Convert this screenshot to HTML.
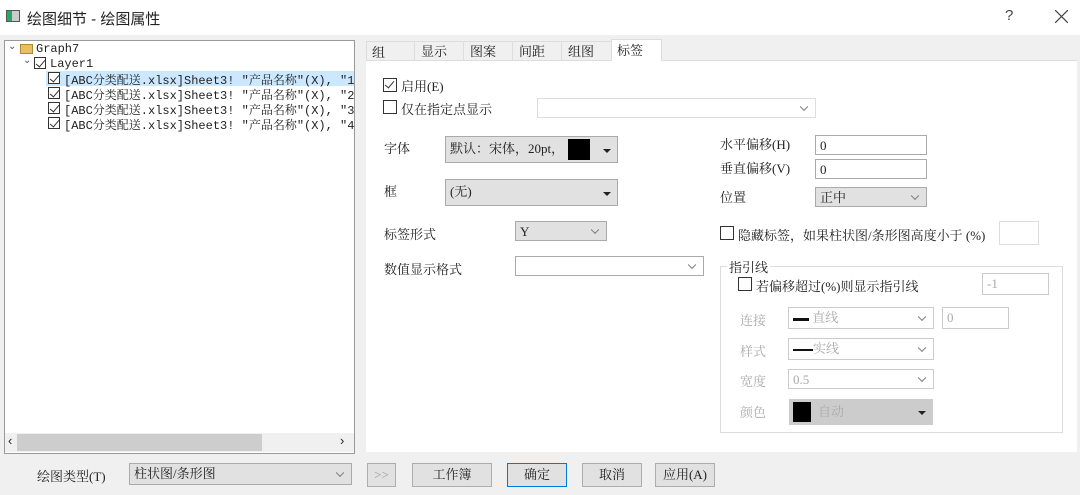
<!DOCTYPE html><html><head><meta charset="utf-8"><style>
*{margin:0;padding:0;box-sizing:border-box}
body{width:1080px;height:495px;background:#f0f0f0;position:relative;overflow:hidden;font-family:"Liberation Serif","Noto Serif CJK SC",serif;font-size:13px;color:#222}
.a{position:absolute;white-space:nowrap}
.t{font-family:"Liberation Mono","Noto Serif CJK SC",monospace;font-size:12px}
.cb{position:absolute;width:14px;height:14px;border:1px solid #333;background:#fff}
.cb.k::after{content:"";position:absolute;left:3px;top:0px;width:4px;height:8px;border:solid #333;border-width:0 1.5px 1.5px 0;transform:rotate(40deg)}
.box{position:absolute;border:1px solid #aaa;background:#fff;padding:2px 4px;line-height:16px}
.g{background:#e1e1e1}
.dd::after{content:"";position:absolute;right:8px;top:50%;width:5px;height:5px;border:solid #777;border-width:0 1px 1px 0;transform:translateY(-70%) rotate(45deg)}
.tri::after{content:"";position:absolute;right:6px;top:50%;border:4px solid transparent;border-top:4px solid #222;border-bottom:0;margin-top:-1px}
.btn{position:absolute;border:1px solid #adadad;background:#e1e1e1;text-align:center;line-height:22px;height:24px}
.dim{color:#aaa}
</style></head><body>
<div class="a" style="left:0;top:0;width:1080px;height:35px;background:#fff"></div>
<div class="a" style="left:6px;top:10px;width:14px;height:12px;border:1px solid #555;background:linear-gradient(90deg,#2a6 0 40%,#ccc 40%)"></div>
<div class="a" style="left:27px;top:8px;font-family:'Liberation Sans','Noto Sans CJK SC',sans-serif;font-size:15px">绘图细节 - 绘图属性</div>
<div class="a" style="left:1005px;top:7px;font-family:'Liberation Sans',sans-serif;font-size:15px;color:#444">?</div>
<svg class="a" style="left:1055px;top:10px" width="13" height="13"><path d="M0 0L13 13M13 0L0 13" stroke="#444" stroke-width="1.2"/></svg>

<div class="a" style="left:4px;top:40px;width:351px;height:414px;background:#fff;border:1px solid #999"></div>
<div class="a" style="left:8px;top:41px;font-size:10px;color:#555">⌄</div>
<div class="a" style="left:20px;top:44px;width:13px;height:10px;background:#e8c060;border:1px solid #b08a30"></div>
<div class="a t" style="left:36px;top:42px">Graph7</div>
<div class="a" style="left:23px;top:55px;font-size:10px;color:#555">⌄</div>
<div class="cb k" style="left:34px;top:57px;width:12px;height:12px"></div>
<div class="a t" style="left:50px;top:57px">Layer1</div>
<div class="a" style="left:46px;top:71px;width:308px;height:15px;background:#cce8ff"></div>
<div class="cb k" style="left:48px;top:72px;width:12px;height:12px"></div>
<div class="a t" style="left:64px;top:71px;width:290px;overflow:hidden">[ABC分类配送.xlsx]Sheet3! "产品名称"(X), "1</div>
<div class="cb k" style="left:48px;top:87px;width:12px;height:12px"></div>
<div class="a t" style="left:64px;top:86px;width:290px;overflow:hidden">[ABC分类配送.xlsx]Sheet3! "产品名称"(X), "2</div>
<div class="cb k" style="left:48px;top:102px;width:12px;height:12px"></div>
<div class="a t" style="left:64px;top:101px;width:290px;overflow:hidden">[ABC分类配送.xlsx]Sheet3! "产品名称"(X), "3</div>
<div class="cb k" style="left:48px;top:117px;width:12px;height:12px"></div>
<div class="a t" style="left:64px;top:116px;width:290px;overflow:hidden">[ABC分类配送.xlsx]Sheet3! "产品名称"(X), "4</div>
<div class="a" style="left:5px;top:433px;width:349px;height:19px;background:#f0f0f0"></div>
<div class="a" style="left:17px;top:434px;width:245px;height:17px;background:#cdcdcd"></div>
<div class="a" style="left:8px;top:433px;font-size:13px;font-family:'Liberation Sans',sans-serif">‹</div>
<div class="a" style="left:340px;top:433px;font-size:13px;font-family:'Liberation Sans',sans-serif">›</div>

<div class="a" style="left:366px;top:60px;width:711px;height:392px;background:#fff;border-top:1px solid #ddd"></div>
<div class="a" style="left:366px;top:41px;width:247px;height:19px;border:1px solid #ddd;border-bottom:0"></div>
<div class="a" style="left:372px;top:42px">组</div>
<div class="a" style="left:414px;top:41px;height:19px;border-left:1px solid #ddd;padding-left:6px">显示</div>
<div class="a" style="left:463px;top:41px;height:19px;border-left:1px solid #ddd;padding-left:6px">图案</div>
<div class="a" style="left:512px;top:41px;height:19px;border-left:1px solid #ddd;padding-left:6px">间距</div>
<div class="a" style="left:561px;top:41px;height:19px;border-left:1px solid #ddd;padding-left:6px">组图</div>
<div class="a" style="left:611px;top:39px;width:51px;height:22px;background:#fff;border:1px solid #ddd;border-bottom:0;padding-left:5px">标签</div>

<div class="cb k" style="left:383px;top:78px"></div><div class="a" style="left:401px;top:76px">启用(E)</div>
<div class="cb" style="left:383px;top:100px"></div><div class="a" style="left:401px;top:99px">仅在指定点显示</div>
<div class="box dd" style="left:537px;top:98px;width:279px;height:20px;border-color:#ddd"></div>
<div class="a" style="left:384px;top:138px">字体</div>
<div class="box g tri" style="left:445px;top:136px;width:173px;height:27px;padding-top:4px">默认：宋体，20pt，</div>
<div class="a" style="left:568px;top:139px;width:22px;height:21px;background:#000"></div>
<div class="a" style="left:384px;top:181px">框</div>
<div class="box g tri" style="left:445px;top:179px;width:173px;height:27px;padding-top:4px">(无)</div>
<div class="a" style="left:384px;top:224px">标签形式</div>
<div class="box g dd" style="left:515px;top:221px;width:92px;height:20px">Y</div>
<div class="a" style="left:384px;top:259px">数值显示格式</div>
<div class="box dd" style="left:515px;top:256px;width:189px;height:20px"></div>

<div class="a" style="left:720px;top:134px">水平偏移(H)</div>
<div class="box" style="left:815px;top:135px;width:112px;height:20px">0</div>
<div class="a" style="left:720px;top:158px">垂直偏移(V)</div>
<div class="box" style="left:815px;top:159px;width:112px;height:20px">0</div>
<div class="a" style="left:720px;top:187px">位置</div>
<div class="box g dd" style="left:815px;top:187px;width:112px;height:20px">正中</div>
<div class="cb" style="left:720px;top:226px"></div>
<div class="a" style="left:738px;top:225px">隐藏标签，如果柱状图/条形图高度小于 (%)</div>
<div class="box" style="left:999px;top:221px;width:40px;height:24px;border-color:#ddd"></div>

<div class="a" style="left:720px;top:266px;width:343px;height:167px;border:1px solid #ddd"></div>
<div class="a" style="left:727px;top:257px;background:#fff;padding:0 2px">指引线</div>
<div class="cb" style="left:738px;top:277px"></div>
<div class="a" style="left:756px;top:276px">若偏移超过(%)则显示指引线</div>
<div class="box dim" style="left:982px;top:273px;width:67px;height:22px;border-color:#ccc">-1</div>
<div class="a dim" style="left:740px;top:310px">连接</div>
<div class="box dd dim" style="left:788px;top:307px;width:146px;height:22px;border-color:#ccc"><span style="display:inline-block;width:16px;height:3px;background:#111;vertical-align:middle"></span> 直线</div>
<div class="box dim" style="left:942px;top:307px;width:67px;height:22px;border-color:#ccc">0</div>
<div class="a dim" style="left:740px;top:341px">样式</div>
<div class="box dd dim" style="left:788px;top:338px;width:146px;height:22px;border-color:#ccc"><span style="display:inline-block;width:20px;height:2px;background:#111;vertical-align:middle"></span>实线</div>
<div class="a dim" style="left:740px;top:371px">宽度</div>
<div class="box dd dim" style="left:788px;top:369px;width:146px;height:20px;border-color:#ccc">0.5</div>
<div class="a dim" style="left:740px;top:402px">颜色</div>
<div class="box tri dim" style="left:789px;top:399px;width:144px;height:26px;background:#ccc;border-color:#ccc;padding:4px 0 0 28px">自动</div>
<div class="a" style="left:793px;top:402px;width:18px;height:20px;background:#000"></div>

<div class="a" style="left:37px;top:466px">绘图类型(T)</div>
<div class="box g dd" style="left:129px;top:463px;width:223px;height:22px">柱状图/条形图</div>
<div class="btn" style="left:367px;top:463px;width:29px;color:#999">&gt;&gt;</div>
<div class="btn" style="left:412px;top:463px;width:80px">工作簿</div>
<div class="btn" style="left:507px;top:463px;width:60px;border:1px solid #0078d7">确定</div>
<div class="btn" style="left:582px;top:463px;width:60px">取消</div>
<div class="btn" style="left:655px;top:463px;width:60px">应用(A)</div>
</body></html>
